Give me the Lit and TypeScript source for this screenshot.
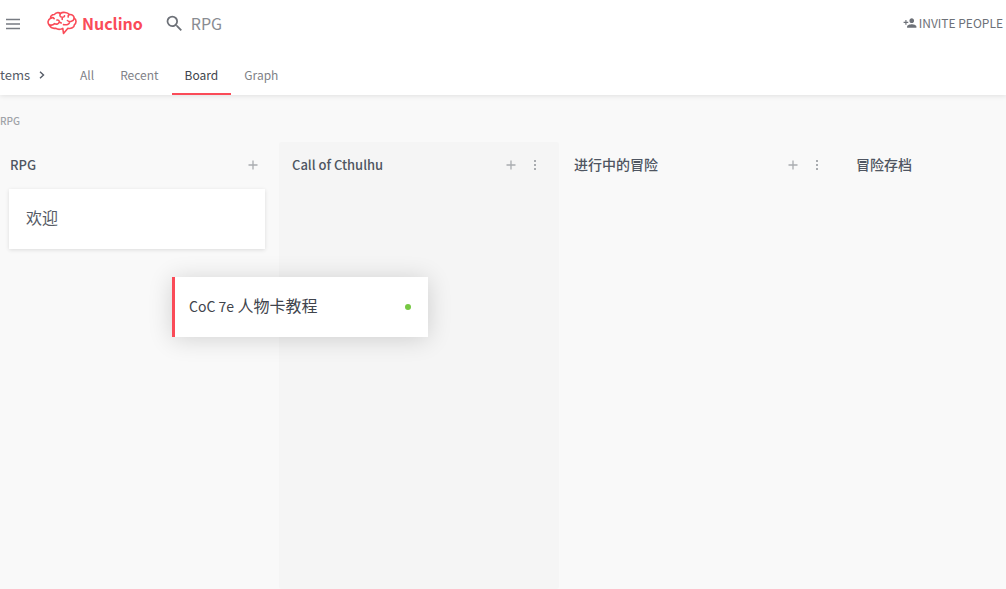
import { LitElement, html, css, svg, nothing } from "lit";
import { customElement, property } from "lit/decorators.js";

interface Column {
  title: string;
  cjk?: boolean;
  menu?: boolean;
  active?: boolean;
  cards: string[];
}

const COLUMNS: Column[] = [
  { title: "RPG", cards: ["欢迎"] },
  { title: "Call of Cthulhu", menu: true, active: true, cards: [] },
  { title: "进行中的冒险", cjk: true, menu: true, cards: [] },
  { title: "冒险存档", cjk: true, menu: true, cards: [] },
];

const TABS = ["All", "Recent", "Board", "Graph"];

const icon = (size: number, body: unknown, box = "0 0 24 24") => html`
  <svg width=${size} height=${size} viewBox=${box} aria-hidden="true">${body}</svg>
`;

const plusIcon = icon(10, svg`<path d="M5 0.5v9M0.5 5h9" fill="none" stroke="currentColor" stroke-width="1.3"/>`, "0 0 10 10");
const dotsIcon = icon(10, svg`<g fill="currentColor"><rect x="4" y="0" width="2" height="2"/><rect x="4" y="4" width="2" height="2"/><rect x="4" y="8" width="2" height="2"/></g>`, "0 0 10 10");

const reset = css`
  * {
    box-sizing: border-box;
  }
  button {
    display: flex;
    align-items: center;
    justify-content: center;
    padding: 0;
    border: 0;
    background: none;
    font: inherit;
    color: inherit;
    cursor: pointer;
  }
  svg {
    display: block;
    flex: none;
  }
`;

@customElement("board-column")
export class BoardColumn extends LitElement {
  @property({ attribute: false }) column!: Column;

  static styles = [
    reset,
    css`
      :host {
        display: block;
        flex: none;
        width: 280px;
        padding: 0 12px;
        border-radius: 3px;
      }
      .head {
        display: flex;
        align-items: center;
        height: 47px;
        padding: 0 0 2px 1px;
      }
      .title {
        flex: 1;
        margin: 0;
        font-size: 13px;
        line-height: 20px;
        font-weight: 500;
        color: #4f5561;
        white-space: nowrap;
      }
      .cjk {
        padding-bottom: 2px;
        font-size: 14px;
      }
      .action {
        width: 24px;
        height: 24px;
        color: #a9acb0;
      }
      .card {
        display: flex;
        align-items: center;
        height: 60px;
        padding: 0 17px 4px;
        background: #fff;
        color: #565b65;
        font-size: 16px;
        line-height: 24px;
        box-shadow: 0 1px 4px rgba(0, 0, 0, 0.12);
      }
    `,
  ];

  render() {
    const c = this.column;
    return html`
      <header class="head">
        <h2 class="title ${c.cjk ? "cjk" : ""}">${c.title}</h2>
        <button class="action" aria-label="Add item">${plusIcon}</button>
        ${c.menu ? html`<button class="action" aria-label="Column menu">${dotsIcon}</button>` : nothing}
      </header>
      ${c.cards.map((t) => html`<article class="card">${t}</article>`)}
    `;
  }
}

@customElement("app-root")
export class AppRoot extends LitElement {
  static styles = [
    reset,
    css`
      :host {
        display: flex;
        flex-direction: column;
        position: relative;
        min-height: 100vh;
        overflow: hidden;
        background: #f9f9f9;
        font-family: "Noto Sans CJK SC", "Noto Sans", sans-serif;
        font-size: 13px;
        line-height: 20px;
        color: #555b66;
      }
      .top {
        position: relative;
        background: #fff;
        box-shadow: 0 1px 5px rgba(0, 0, 0, 0.1);
      }
      .bar {
        display: flex;
        align-items: center;
        height: 47px;
        padding: 0 3px 0 4px;
      }
      .menu {
        color: #777b82;
      }
      .brand {
        display: flex;
        align-items: center;
        gap: 5px;
        margin-left: 25px;
        padding-bottom: 2px;
        color: #fa4b58;
        font-size: 16px;
        line-height: 24px;
        font-weight: 700;
        text-decoration: none;
      }
      .search {
        display: flex;
        flex: 1;
        align-items: center;
        gap: 6px;
        margin-left: 21px;
        color: #6d7178;
      }
      .query {
        flex: 1;
        min-width: 0;
        padding: 0 0 2px;
        border: 0;
        outline: 0;
        background: none;
        color: #898c92;
        font-family: inherit;
        font-size: 16px;
        line-height: 24px;
      }
      .invite {
        gap: 2px;
        padding-bottom: 2px;
        color: #6d7178;
        font-size: 12px;
        white-space: nowrap;
      }
      .tabs {
        display: flex;
        height: 48px;
      }
      .crumb {
        display: flex;
        align-items: center;
        gap: 8px;
        width: 67px;
        padding-top: 8px;
        color: #555b66;
        text-decoration: none;
      }
      .tab {
        padding: 18px 13px 8px;
        border-bottom: 2px solid transparent;
        color: #7f8288;
        font-size: 12px;
        text-decoration: none;
      }
      .current {
        border-color: #fa4b58;
        color: #40444c;
      }
      .path {
        padding: 16px 0 11px;
        color: #a0a3a8;
        font-size: 10px;
        font-weight: 500;
      }
      .columns {
        display: flex;
        flex: 1;
        gap: 2px;
        margin-left: -3px;
      }
      .active {
        background: #f5f5f5;
      }
      .dragged {
        position: absolute;
        top: 277px;
        left: 172px;
        display: flex;
        align-items: center;
        justify-content: space-between;
        width: 256px;
        height: 60px;
        padding: 0 17px 0 14px;
        border-left: 3px solid #fa4b58;
        background: #fff;
        color: #40444c;
        font-size: 16px;
        line-height: 24px;
        box-shadow: 0 2px 24px rgba(0, 0, 0, 0.16);
      }
      .label {
        padding-bottom: 3px;
      }
      .latin {
        font-size: 14px;
      }
      .online {
        width: 6px;
        height: 6px;
        border-radius: 50%;
        background: #76c843;
      }
    `,
  ];

  render() {
    return html`
      <header class="top">
        <div class="bar">
          <button class="menu" aria-label="Menu">
            ${icon(18, svg`<path d="M2 4.500h14M2 9h14M2 13.500h14" fill="none" stroke="currentColor" stroke-width="1.6"/>`, "0 0 18 18")}
          </button>
          <a class="brand" href="#">
            <svg width="30" height="24" viewBox="0 0 30 24" fill="none" stroke="currentColor" stroke-width="1.6" stroke-linecap="round" stroke-linejoin="round" aria-hidden="true">
              <path d="M13.500 2.500C11.500 1 8.500 1.500 7.500 3.500C4.500 3.500 3.200 5.500 3.700 7.200C.8 8.500.2 12 2.300 14.200C3.500 16.500 6 17.700 8.500 17.200C10.500 18.600 13.500 18.600 15.800 17.400L16.500 22.500L20.700 17.400C24 18 27.500 16.500 27.300 13.800C29.700 12 29.500 8.500 27.200 7.300C26.900 4.700 24.800 3.300 22.300 3.500C20.500 1.300 15.700.5 13.500 2.500Z"/>
              <path d="M3.700 7.200C5.200 6.300 6.500 6.700 7.200 7.700M2.300 13.700C4.300 14.600 6.300 13.900 7.600 12.600C9.500 13.600 11.800 13 12.200 10.900C12.400 9.500 11.300 8.700 10 9.100M12.200 10.900L14.200 12M13.500 2.500C12.200 4.200 13 6.200 15.200 6.300C17 6.300 17.600 5.300 17.500 4.700M15.200 6.300V8.500M27.200 7.300C26.500 10.500 22.800 11.500 20.400 9.500M22.700 10.700C22.500 13.500 19.500 14.200 16.500 13.600M22.300 3.500C21.300 4 20.900 5 21.200 6"/>
            </svg>
            <span>Nuclino</span>
          </a>
          <label class="search">
            ${icon(21, svg`<path fill="currentColor" d="M15.500 14h-.79l-.28-.27A6.471 6.471 0 0 0 16 9.500 6.500 6.500 0 1 0 9.500 16c1.610 0 3.090-.59 4.230-1.570l.27.28v.79l5 4.990L20.490 19l-4.990-5zm-6 0C7.010 14 5 11.990 5 9.500S7.010 5 9.500 5 14 7.010 14 9.500 11.990 14 9.500 14z"/>`)}
            <input class="query" type="text" value="RPG" aria-label="Search" />
          </label>
          <button class="invite">
            ${icon(14, svg`<path fill="currentColor" d="M15 12c2.210 0 4-1.790 4-4s-1.790-4-4-4-4 1.790-4 4 1.790 4 4 4zm-9-2V7H4v3H1v2h3v3h2v-3h3v-2H6zm9 4c-2.670 0-8 1.340-8 4v2h16v-2c0-2.660-5.330-4-8-4z"/>`)}
            <span>INVITE PEOPLE</span>
          </button>
        </div>
        <nav class="tabs">
          <a class="crumb" href="#">
            <span>tems</span>
            ${icon(8, svg`<path d="M2 .8L5.500 4L2 7.200" fill="none" stroke="currentColor" stroke-width="1.400"/>`, "0 0 8 8")}
          </a>
          ${TABS.map((t) => html`<a class="tab ${t === "Board" ? "current" : ""}" href="#">${t}</a>`)}
        </nav>
      </header>
      <div class="path">RPG</div>
      <main class="columns">
        ${COLUMNS.map((c) => html`<board-column class=${c.active ? "active" : ""} .column=${c}></board-column>`)}
      </main>
      <article class="dragged">
        <span class="label"><span class="latin">CoC 7e</span> 人物卡教程</span>
        <span class="online"></span>
      </article>
    `;
  }
}
